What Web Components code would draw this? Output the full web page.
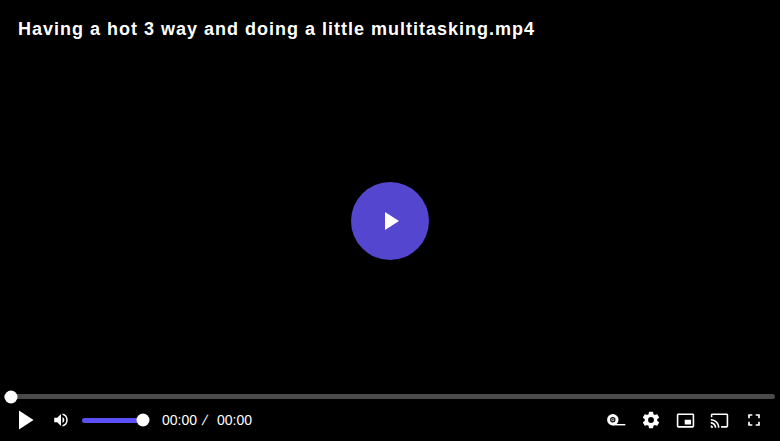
<!DOCTYPE html>
<html>
<head>
<meta charset="utf-8">
<title>Player</title>
<style>
    html, body { margin: 0; height: 100%; background: #000; }
</style>
</head>
<body>
<video-player>
    <span slot="title">Having a hot 3 way and doing a little multitasking.mp4</span>
</video-player>

<script>
class IconButton extends HTMLElement
{
    constructor()
    {
        super();
        const Shadow = this.attachShadow({mode: "open"});
        Shadow.innerHTML = `
        <slot></slot>
        <style>
            :host {
                display: flex;
                align-items: center;
                justify-content: center;
                width: 24px;
                height: 24px;
                color: #fff;
                flex: none;
            }
            ::slotted(svg) { display: block; fill: currentColor; }
        </style>
        `;
    }
}

class RangeBar extends HTMLElement
{
    constructor()
    {
        super();
        const Shadow = this.attachShadow({mode: "open"});
        Shadow.innerHTML = `
        <div class="Track"><div class="Fill"></div><div class="Thumb"></div></div>
        <style>
            :host { display: block; }
            .Track {
                position: relative;
                display: flex;
                height: var(--bar-height, 5px);
                border-radius: 3px;
                background-color: var(--bar-track, #4a4a4a);
            }
            .Fill {
                width: var(--bar-value, 0%);
                border-radius: 3px;
                background-color: var(--bar-fill, transparent);
            }
            .Thumb {
                position: absolute;
                top: 50%;
                left: var(--thumb-left, 0);
                width: 13px;
                height: 13px;
                border-radius: 50%;
                background-color: #fff;
                transform: translate(-50%, -50%);
            }
        </style>
        `;
    }
}

class PlayerControls extends HTMLElement
{
    constructor()
    {
        super();
        const Shadow = this.attachShadow({mode: "open"});
        Shadow.innerHTML = `
        <range-bar class="Seek"></range-bar>
        <div class="Row">
            <icon-button class="Play"><svg width="24" height="24" viewBox="0 0 24 24"><path d="M5 2.500 19.500 12 5 21.500z"/></svg></icon-button>
            <icon-button class="Volume"><svg width="18" height="18" viewBox="0 0 24 24"><path d="M3 9v6h4l5 5V4L7 9H3zm13.500 3A4.500 4.500 0 0 0 14 7.970v8.050A4.470 4.470 0 0 0 16.500 12zM14 3.230v2.060a7 7 0 0 1 0 13.420v2.060a9 9 0 0 0 0-17.540z"/></svg></icon-button>
            <range-bar class="Level"></range-bar>
            <div class="Time"><span>00:00</span><span class="Sep">/</span><span>00:00</span></div>
            <div class="Right">
                <icon-button><svg width="20" height="20" viewBox="0 0 20 20"><circle cx="6.800" cy="9.700" r="5.700"/><rect x="6.800" y="14" width="12.500" height="1.400"/><circle cx="6.800" cy="9.700" r="2.700" fill="#000"/><circle cx="6.800" cy="9.700" r="1.700" fill="#aaa"/><circle cx="6.800" cy="9.700" r=".6" fill="#000"/></svg></icon-button>
                <icon-button><svg width="20" height="20" viewBox="0 0 24 24"><path d="M19.430 12.980a7.800 7.800 0 0 0 0-1.960l2.110-1.650a.5.500 0 0 0 .12-.64l-2-3.460a.5.500 0 0 0-.61-.22l-2.490 1a7.300 7.300 0 0 0-1.690-.98l-.38-2.650A.49.49 0 0 0 14 2h-4a.49.49 0 0 0-.49.42l-.38 2.650a7.700 7.700 0 0 0-1.690.98l-2.490-1a.49.490 0 0 0-.61.22l-2 3.460a.49.490 0 0 0 .12.64l2.110 1.650a7.900 7.900 0 0 0 0 1.960l-2.110 1.650a.5.500 0 0 0-.12.64l2 3.460a.5.500 0 0 0 .61.22l2.490-1c.52.4 1.080.73 1.690.98l.38 2.650c.03.240.24.420.49.420h4c.25 0 .46-.18.49-.42l.38-2.650a7.700 7.700 0 0 0 1.690-.98l2.490 1a.49.490 0 0 0 .61-.22l2-3.460a.5.500 0 0 0-.12-.64l-2.110-1.650zM12 15.500a3.500 3.500 0 1 1 0-7 3.500 3.500 0 0 1 0 7z"/></svg></icon-button>
                <icon-button><svg width="19" height="19" viewBox="0 0 24 24"><path d="M19 11h-8v6h8v-6zm4 8V4.980C23 3.880 22.100 3 21 3H3c-1.100 0-2 .88-2 1.980V19c0 1.100.9 2 2 2h18c1.100 0 2-.9 2-2zm-2 .02H3V4.970h18v14.050z"/></svg></icon-button>
                <icon-button><svg width="19" height="19" viewBox="0 0 24 24"><path d="M21 3H3c-1.100 0-2 .9-2 2v3h2V5h18v14h-7v2h7c1.100 0 2-.9 2-2V5c0-1.100-.9-2-2-2zM1 18v3h3c0-1.660-1.340-3-3-3zm0-4v2c2.760 0 5 2.240 5 5h2c0-3.870-3.130-7-7-7zm0-4v2a9 9 0 0 1 9 9h2c0-6.080-4.930-11-11-11z"/></svg></icon-button>
                <icon-button><svg width="20" height="20" viewBox="0 0 24 24"><path d="M7 14H5v5h5v-2H7v-3zm-2-4h2V7h3V5H5v5zm12 7h-3v2h5v-5h-2v3zM14 5v2h3v3h2V5h-5z"/></svg></icon-button>
            </div>
        </div>
        <style>
            :host {
                display: block;
                padding: 0 5px 9px 4px;
                font-family: "Liberation Sans", Arial, sans-serif;
                font-size: 14px;
                color: #fff;
            }
            .Seek {
                --thumb-left: 7.300px;
                margin-bottom: 9px;
            }
            .Row {
                display: flex;
                align-items: center;
                height: 24px;
            }
            .Play { margin-left: 10px; }
            .Volume { margin-left: 11px; }
            .Level {
                width: 61.300px;
                margin-left: 9px;
                --bar-track: transparent;
                --bar-fill: #5b50f6;
                --bar-value: 100%;
                --thumb-left: 100%;
            }
            .Time {
                display: flex;
                margin-left: 18.700px;
                line-height: 16px;
                white-space: nowrap;
            }
            .Sep {
                width: 7px;
                margin: 0 8px 0 5px;
                transform: translateX(1px) skewX(-16deg);
            }
            .Right {
                display: flex;
                gap: 10.500px;
                margin-left: auto;
                margin-right: 9px;
            }
        </style>
        `;
    }
}

class VideoPlayer extends HTMLElement
{
    constructor()
    {
        super();
        const Shadow = this.attachShadow({mode: "open"});
        Shadow.innerHTML = `
        <div class="Title"><slot name="title"></slot></div>
        <div class="Stage">
            <div class="BigPlay"><svg width="24" height="24" viewBox="0 0 24 24"><path d="M7 3v18l14-9z" fill="#fff"/></svg></div>
        </div>
        <player-controls></player-controls>
        <style>
            :host {
                display: flex;
                flex-direction: column;
                height: 441px;
                width: 780px;
                background-color: #000;
                color: #fff;
                font-family: "Liberation Sans", Arial, sans-serif;
            }
            .Title {
                padding: 18px 18px 0 18px;
                line-height: 22px;
                font-size: 18px;
                font-weight: 700;
                letter-spacing: 1px;
            }
            .Stage {
                flex: 1;
                position: relative;
            }
            .BigPlay {
                position: absolute;
                left: 351px;
                top: 142px;
                width: 78px;
                height: 78px;
                display: flex;
                align-items: center;
                justify-content: center;
                border-radius: 50%;
                background-color: #5546cf;
            }
        </style>
        `;
    }
}

customElements.define("icon-button", IconButton);
customElements.define("range-bar", RangeBar);
customElements.define("player-controls", PlayerControls);
customElements.define("video-player", VideoPlayer);
</script>
</body>
</html>
